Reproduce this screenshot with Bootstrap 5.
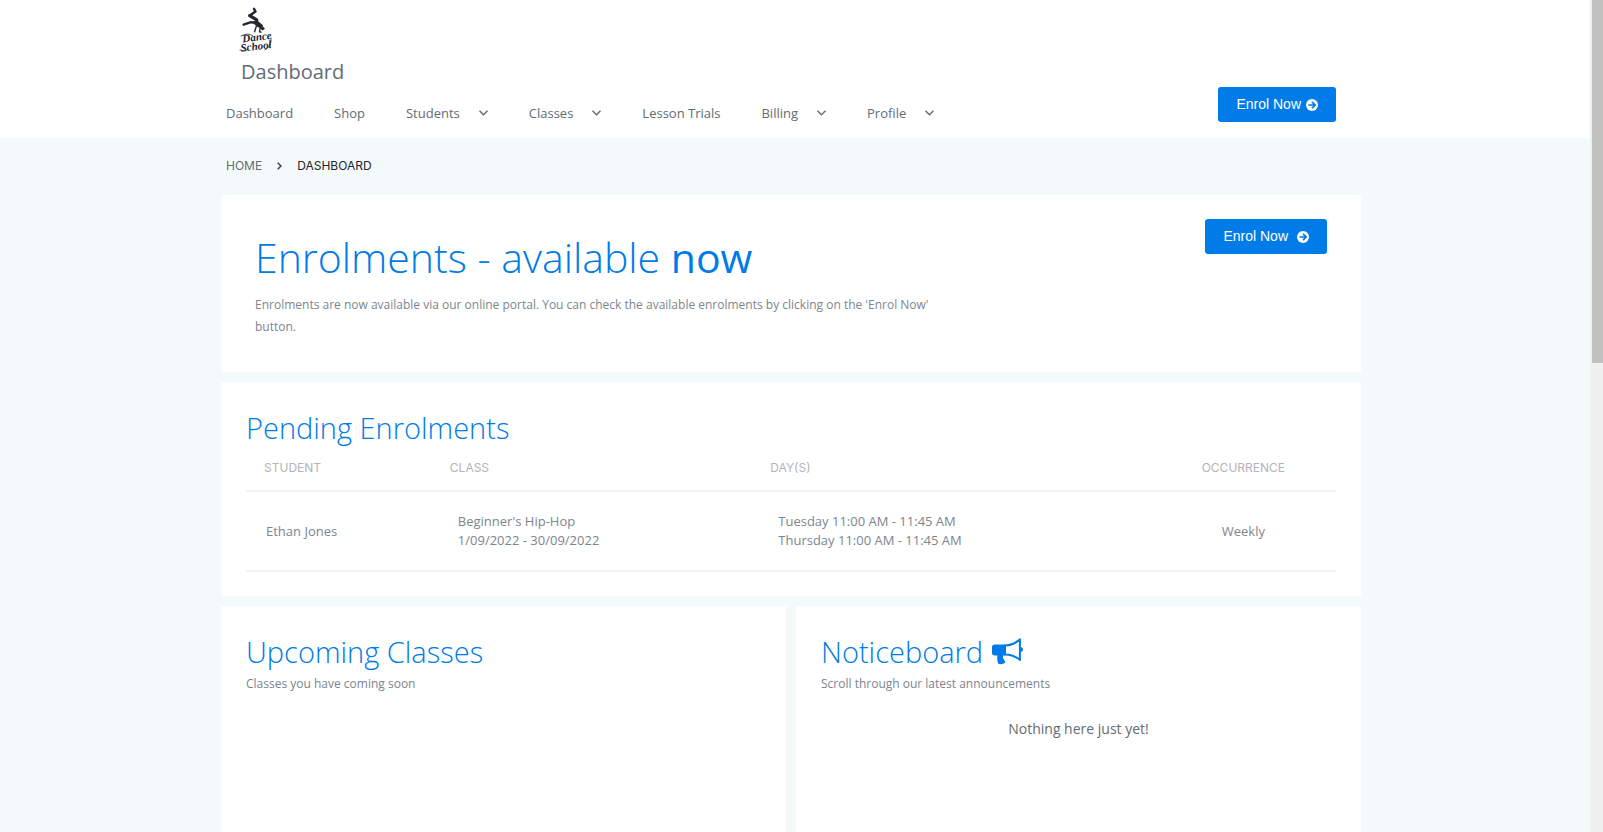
<!DOCTYPE html>
<html lang="en">
<head>
<meta charset="utf-8">
<meta name="viewport" content="width=device-width, initial-scale=1">
<title>Dashboard - Dance School</title>
<link href="https://cdn.jsdelivr.net/npm/bootstrap@5.3.0/dist/css/bootstrap.min.css" rel="stylesheet">
<style>
  body { font-family: "Open Sans", "Noto Sans", sans-serif; font-size: 14px; line-height: 19px; color: #626c75; background: #f4f9fa; }
  a { color: inherit; text-decoration: none; }
  .page-main { padding-right: 8px; }
  .site-header { background: #fff; padding-right: 8px; }
  .wrap { width: 100%; max-width: 1140px; margin: 0 auto; }
  .stack { gap: 10px; }
  .brand-logo { padding: 5px 0 0 18px; }
  .brand-title { font-size: 20px; line-height: 28px; padding-left: 20px; }
  .main-nav { gap: 41px; padding: 17px 0 15px 5px; }
  .main-nav .nav-link { padding: 0; color: inherit; display: flex; align-items: center; gap: 19px; line-height: 20px; font-size: 13px; }
  .header-action { padding: 0 25px 16px 0; }
  .btn-enrol { background: #007be8; color: #fff; font-family: "Liberation Sans", Arial, sans-serif; font-size: 14px; line-height: 19px; padding: 8px 18px; border: 0; border-radius: 3px; display: inline-flex; align-items: center; gap: 5px; }
  .btn-enrol:hover { background: #006fd2; color: #fff; }
  .btn-roomy { gap: 9px; }
  .caps { font-family: Inter, "Open Sans", sans-serif; font-size: 12px; text-transform: uppercase; }
  .crumbs { padding: 18px 5px 9px; gap: 15px; line-height: 20px; }
  .crumbs span { color: #20262c; }
  .panel { background: #fff; padding: 24px 25px; }
  .panel h1, .panel h2 { color: #007be8; font-weight: 300; margin: 0; }
  .panel h1 { font-size: 41px; line-height: 58px; }
  .panel h1 strong { font-weight: 500; }
  .panel h2 { font-size: 29px; line-height: 43px; gap: 9px; }
  .hint { color: #7d858d; font-size: 12px; line-height: 22px; margin: 0; }
  .hero { padding: 24px 34px 34px; }
  .hero-copy { max-width: 700px; padding-top: 9px; }
  .hero-copy .hint { padding-top: 8px; }
  .enrol-table { table-layout: fixed; margin: 0; color: #7d858d; font-size: 13px; }
  .enrol-table th { color: #b4b4b8; font-weight: 400; padding: 11px 18px 14px; line-height: 16px; border-bottom: 2px solid #f0f2f3; }
  .enrol-table td { padding: 20px; vertical-align: middle; border-bottom: 2px solid #f0f2f3; }
  .enrol-table th:nth-child(2), .enrol-table th:nth-child(3) { padding-left: 12px; }
  .scroll-rail { width: 13px; background: #f0f0f0; padding-left: 2px; }
  .scroll-thumb { height: 363px; background: #c1c1bf; }
</style>
</head>
<body>
<div class="d-flex min-vh-100">
  <div class="flex-grow-1 d-flex flex-column">
    <header class="site-header">
      <div class="wrap d-flex justify-content-between align-items-end">
        <div>
          <a href="#" class="d-block brand-logo" aria-label="Dance School">
            <svg class="d-block" width="36" height="53" viewBox="0 -2 36 53" fill="none" stroke="#26262f" stroke-linecap="round" stroke-linejoin="round">
              <path d="M15 1.800l1.500 2.800-5.800 4" stroke-width="2.400"/>
              <path d="M10.700 8.600l7 4.200v3" stroke-width="3.200"/>
              <path d="M17.500 15.800l-5.500-.6-7.400 2.400" stroke-width="2.400"/>
              <path d="M17 15.600l4.500 3.400" stroke-width="4.600"/>
              <path d="M21 18.500l-3.600.5-1.800 5.700M21.300 20l-.8 4.800 1.600.3" stroke-width="1.400"/>
              <circle cx="23.600" cy="21.500" r="1.500" fill="#26262f" stroke-width=".6"/>
              <g transform="rotate(-7 16 36)" fill="#26262f" stroke="none" font-family="Liberation Serif, serif" font-style="italic" font-weight="700" font-size="11">
                <text x="4" y="34">Dance</text>
                <text x="1" y="43">School</text>
              </g>
              <path d="M2 29q7-4 12 0M1 43q7 2 8-1M26 43q7-4 6-12" stroke-width=".8"/>
            </svg>
          </a>
          <div class="brand-title">Dashboard</div>
          <nav class="main-nav d-flex flex-wrap" aria-label="Main">
            <a class="nav-link" href="#">Dashboard</a>
            <a class="nav-link" href="#">Shop</a>
            <a class="nav-link" href="#">Students <svg width="9" height="6" viewBox="0 0 9 6" fill="none" stroke="#626c75" stroke-width="1.4"><path d="M.5.7l4 4 4-4"/></svg></a>
            <a class="nav-link" href="#">Classes <svg width="9" height="6" viewBox="0 0 9 6" fill="none" stroke="#626c75" stroke-width="1.4"><path d="M.5.7l4 4 4-4"/></svg></a>
            <a class="nav-link" href="#">Lesson Trials</a>
            <a class="nav-link" href="#">Billing <svg width="9" height="6" viewBox="0 0 9 6" fill="none" stroke="#626c75" stroke-width="1.4"><path d="M.5.7l4 4 4-4"/></svg></a>
            <a class="nav-link" href="#">Profile <svg width="9" height="6" viewBox="0 0 9 6" fill="none" stroke="#626c75" stroke-width="1.4"><path d="M.5.7l4 4 4-4"/></svg></a>
          </nav>
        </div>
        <div class="header-action">
          <button type="button" class="btn btn-enrol">Enrol Now
            <svg width="12" height="12" viewBox="0 0 12 12"><circle cx="6" cy="6" r="6" fill="#fff"/><path d="M2.400 6h6.400M6 2.800L9.200 6 6 9.200" fill="none" stroke="#007be8" stroke-width="1.700"/></svg>
          </button>
        </div>
      </div>
    </header>

    <main class="page-main flex-grow-1 d-flex flex-column">
      <div class="wrap stack flex-grow-1 d-flex flex-column">
        <nav class="crumbs caps d-flex align-items-center" aria-label="Breadcrumb">
          <a href="#">Home</a>
          <svg width="5" height="8" viewBox="0 0 5 8" fill="none" stroke="#3c434b" stroke-width="1.5"><path d="M.7.7L4 4 .7 7.300"/></svg>
          <span>Dashboard</span>
        </nav>

        <section class="panel hero d-flex justify-content-between align-items-start">
          <div class="hero-copy">
            <h1>Enrolments - available <strong>now</strong></h1>
            <p class="hint">Enrolments are now available via our online portal. You can check the available enrolments by clicking on the 'Enrol Now' button.</p>
          </div>
          <button type="button" class="btn btn-enrol btn-roomy">Enrol Now
            <svg width="12" height="12" viewBox="0 0 12 12"><circle cx="6" cy="6" r="6" fill="#fff"/><path d="M2.400 6h6.400M6 2.800L9.200 6 6 9.200" fill="none" stroke="#007be8" stroke-width="1.700"/></svg>
          </button>
        </section>

        <section class="panel">
          <h2>Pending Enrolments</h2>
          <table class="table enrol-table">
            <colgroup><col style="width:17.6%"><col style="width:29.4%"><col style="width:36%"><col style="width:17%"></colgroup>
            <thead><tr class="caps"><th scope="col">Student</th><th scope="col">Class</th><th scope="col">Day(s)</th><th scope="col" class="text-center">Occurrence</th></tr></thead>
            <tbody><tr><td>Ethan Jones</td><td>Beginner's Hip-Hop<br>1/09/2022 - 30/09/2022</td><td>Tuesday 11:00 AM - 11:45 AM<br>Thursday 11:00 AM - 11:45 AM</td><td class="text-center">Weekly</td></tr></tbody>
          </table>
        </section>

        <div class="stack d-flex flex-grow-1">
          <section class="panel flex-fill w-50">
            <h2>Upcoming Classes</h2>
            <p class="hint">Classes you have coming soon</p>
          </section>
          <section class="panel flex-fill w-50">
            <h2 class="d-flex align-items-center">Noticeboard
              <svg width="31" height="27" viewBox="0 0 31 27" fill="#007be8"><path d="M2.500 6.500H13v11h-1.800c-.8 2 .3 3.600 1 4.400.9 1 .4 1.400 1.300 2.200-1 2.200-5.200 2.500-7.200 1.700C5.500 23.500 4.700 20.500 5.500 17.500h-3C1 17.500 0 16.500 0 15V9c0-1.500 1-2.500 2.500-2.500z"/><path d="M13 7.500c6-.2 11-2.500 14.900-6.300v20.700C24 18.500 19 16.700 13 16.500z" fill="none" stroke="#007be8" stroke-width="2" stroke-linejoin="round"/><path d="M28.500 9c1.600 0 2.500 1.100 2.500 2.500S30.100 14 28.500 14z"/></svg>
            </h2>
            <p class="hint">Scroll through our latest announcements</p>
            <p class="text-center mb-0 pt-4">Nothing here just yet!</p>
          </section>
        </div>
      </div>
    </main>
  </div>
  <div class="scroll-rail" aria-hidden="true"><div class="scroll-thumb"></div></div>
</div>
<script src="https://cdn.jsdelivr.net/npm/bootstrap@5.3.0/dist/js/bootstrap.bundle.min.js"></script>
</body>
</html>
